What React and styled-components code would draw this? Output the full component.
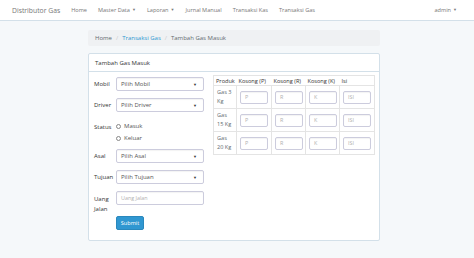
import React from "react";
import styled, { createGlobalStyle } from "styled-components";

const Global = createGlobalStyle`
  html, body { margin: 0; padding: 0; }
  body {
    background: #f5f8fa;
    font-family: "Open Sans", "Liberation Sans", sans-serif;
    font-size: 6px;
    color: #636b6f;
    width: 474px;
    height: 258px;
    overflow: hidden;
  }
  * { box-sizing: border-box; }
`;

const Navbar = styled.nav`
  height: 21px;
  background: #fff;
  border-bottom: 1px solid #d3e0e9;
  display: flex;
  align-items: center;
  padding: 0 17px 0 12px;
`;

const Brand = styled.div`
  font-size: 6.8px;
  color: #777;
  margin-right: 11px;
`;

const NavLinks = styled.div`
  display: flex;
  gap: 11px;
  flex: 1;
`;

const NavLink = styled.span`
  color: #777;
  font-size: 5.6px;
`;

const Caret = styled.span`
  font-size: 4px;
  margin-left: 2px;
  vertical-align: 1px;
`;

const Main = styled.main`
  width: 292px;
  margin: 9px 0 0 88px;
`;

const Breadcrumb = styled.div`
  height: 16px;
  background: #eff1f3;
  border-radius: 2px;
  display: flex;
  align-items: center;
  padding: 0 7px;
  gap: 4px;
  font-size: 6px;
  color: #777;
`;

const Crumb = styled.span`
  color: ${(p) => (p.$link ? "#3097d1" : p.$sep ? "#ccc" : "#636b6f")};
`;

const Panel = styled.section`
  margin-top: 7px;
  background: #fff;
  border: 1px solid #d3e0e9;
  border-radius: 2px;
`;

const PanelHeading = styled.div`
  height: 18px;
  border-bottom: 1px solid #d3e0e9;
  display: flex;
  align-items: center;
  padding: 0 6px;
  color: #333;
  font-size: 6px;
`;

const PanelBody = styled.div`
  padding: 5px 4px 10px 5px;
  display: flex;
  gap: 4px;
  align-items: flex-start;
`;

const Form = styled.div`
  width: 117px;
  display: flex;
  flex-direction: column;
  gap: 7px;
`;

const Row = styled.div`
  display: flex;
  align-items: ${(p) => (p.$top ? "flex-start" : "center")};
  min-height: 14px;
`;

const Label = styled.div`
  width: 22px;
  color: #333;
  font-size: 6px;
  line-height: 10px;
  padding-top: ${(p) => (p.$top ? "3px" : "0")};
`;

const Select = styled.div`
  width: 88px;
  height: 14px;
  border: 1px solid #ccd;
  border-radius: 2px;
  display: flex;
  align-items: center;
  justify-content: space-between;
  padding: 0 6px 0 4px;
  color: #555;
  font-size: 6px;
  box-shadow: inset 0 1px 1px rgba(0,0,0,0.05);
`;

const SelCaret = styled.span`
  font-size: 4px;
  color: #333;
`;

const Input = styled.div`
  width: ${(p) => p.$w || "88px"};
  height: ${(p) => p.$h || "14px"};
  border: 1px solid #ccd;
  border-radius: 2px;
  display: flex;
  align-items: center;
  padding: 0 4px;
  color: #b0b0b0;
  font-size: 5.4px;
  box-shadow: inset 0 1px 1px rgba(0,0,0,0.05);
`;

const Radios = styled.div`
  display: flex;
  flex-direction: column;
  gap: 3px;
  padding-top: 3px;
  margin-bottom: -1px;
`;

const Radio = styled.div`
  display: flex;
  align-items: center;
  gap: 3px;
  color: #555;
  font-size: 6px;
  line-height: 9px;
`;

const Circle = styled.span`
  width: 5px;
  height: 5px;
  border: 1px solid #888;
  border-radius: 50%;
`;

const Button = styled.div`
  margin: -5px 0 0 22px;
  width: 28px;
  height: 14px;
  background: #3097d1;
  border: 1px solid #2a88bd;
  border-radius: 2px;
  color: #fff;
  font-size: 5.6px;
  display: flex;
  align-items: center;
  justify-content: center;
`;

const Table = styled.table`
  border-collapse: collapse;
  width: 161px;
  margin-top: -2px;
  table-layout: fixed;
  border: 1px solid #e4e4e4;
`;

const Th = styled.th`
  font-weight: normal;
  text-align: left;
  color: #333;
  font-size: 5.6px;
  height: 10px;
  padding: 0 2px;
  white-space: nowrap;
  width: ${(p) => p.$w};
`;

const Td = styled.td`
  border: 1px solid #e4e4e4;
  height: 23px;
  padding: 0 3px;
  font-size: 5.6px;
  line-height: 9px;
  color: #636b6f;
`;

const products = [["Gas 3", "Kg"], ["Gas", "15 Kg"], ["Gas", "20 Kg"]];

export default function App() {
  return (
    <>
      <Global />
      <Navbar>
        <Brand>Distributor Gas</Brand>
        <NavLinks>
          <NavLink>Home</NavLink>
          <NavLink>Master Data<Caret>▼</Caret></NavLink>
          <NavLink>Laporan<Caret>▼</Caret></NavLink>
          <NavLink>Jurnal Manual</NavLink>
          <NavLink>Transaksi Kas</NavLink>
          <NavLink>Transaksi Gas</NavLink>
        </NavLinks>
        <NavLink>admin<Caret>▼</Caret></NavLink>
      </Navbar>
      <Main>
        <Breadcrumb>
          <Crumb>Home</Crumb>
          <Crumb $sep>/</Crumb>
          <Crumb $link>Transaksi Gas</Crumb>
          <Crumb $sep>/</Crumb>
          <Crumb>Tambah Gas Masuk</Crumb>
        </Breadcrumb>
        <Panel>
          <PanelHeading>Tambah Gas Masuk</PanelHeading>
          <PanelBody>
            <Form>
              <Row>
                <Label>Mobil</Label>
                <Select>Pilih Mobil<SelCaret>▼</SelCaret></Select>
              </Row>
              <Row>
                <Label>Driver</Label>
                <Select>Pilih Driver<SelCaret>▼</SelCaret></Select>
              </Row>
              <Row $top>
                <Label $top>Status</Label>
                <Radios>
                  <Radio><Circle />Masuk</Radio>
                  <Radio><Circle />Keluar</Radio>
                </Radios>
              </Row>
              <Row>
                <Label>Asal</Label>
                <Select>Pilih Asal<SelCaret>▼</SelCaret></Select>
              </Row>
              <Row>
                <Label>Tujuan</Label>
                <Select>Pilih Tujuan<SelCaret>▼</SelCaret></Select>
              </Row>
              <Row $top>
                <Label $top>Uang Jalan</Label>
                <Input>Uang Jalan</Input>
              </Row>
              <Button>Submit</Button>
            </Form>
            <Table>
              <thead>
                <tr>
                  <Th $w="23px">Produk</Th>
                  <Th $w="35px">Kosong (P)</Th>
                  <Th $w="34px">Kosong (R)</Th>
                  <Th $w="34px">Kosong (K)</Th>
                  <Th $w="35px">Isi</Th>
                </tr>
              </thead>
              <tbody>
                {products.map((p) => (
                  <tr key={p[1] + p[0]}>
                    <Td>{p[0]}<br />{p[1]}</Td>
                    {["P", "R", "K", "ISI"].map((ph) => (
                      <Td key={ph}><Input $w="28px" $h="13px">{ph}</Input></Td>
                    ))}
                  </tr>
                ))}
              </tbody>
            </Table>
          </PanelBody>
        </Panel>
      </Main>
    </>
  );
}
